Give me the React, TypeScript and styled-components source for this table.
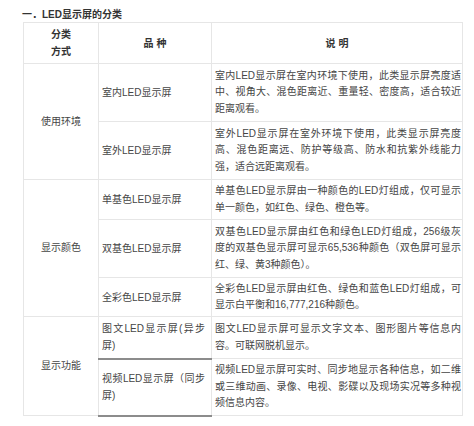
import styled, { createGlobalStyle } from "styled-components";

const GlobalStyle = createGlobalStyle`
  html, body {
    margin: 0;
    padding: 0;
    background: #fff;
  }
  body {
    font-family: "Liberation Sans", "Noto Sans CJK SC", sans-serif;
    color: #454545;
  }
`;

const Page = styled.div`
  width: 474px;
  height: 426px;
  padding: 8px 0 0 22px;
  box-sizing: border-box;
`;

const Title = styled.div`
  font-size: 10px;
  font-weight: bold;
  line-height: 14px;
  color: #333;
`;

const Table = styled.table`
  margin-left: 1px;
  width: 436px;
  border-collapse: collapse;
  table-layout: fixed;
  font-size: 10px;
`;

const HeadCell = styled.th<{ $w: number }>`
  width: ${(p) => p.$w}px;
  border: 1px solid #e6e6e6;
  padding: 3px 0;
  font-weight: bold;
  line-height: 17px;
  color: #333;
  text-align: center;
  vertical-align: middle;
`;

const Row = styled.tr<{ $h: number }>`
  height: ${(p) => p.$h}px;
`;

const GroupCell = styled.td`
  border: 1px solid #e6e6e6;
  text-align: center;
  vertical-align: middle;
  line-height: 16px;
  padding: 0;
`;

const KindCell = styled.td<{ $strong?: boolean }>`
  border: 1px solid #e6e6e6;
  border-bottom: ${(p) => (p.$strong ? "2px solid #8c8c8c" : "1px solid #e6e6e6")};
  padding: 0 6px 0 3px;
  vertical-align: middle;
  line-height: 17px;
`;

const NoteCell = styled.td`
  border: 1px solid #e6e6e6;
  padding: 0 1px 0 3px;
  vertical-align: middle;
  line-height: 16.5px;
`;

const Line = styled.span<{ $spread?: boolean }>`
  display: block;
  white-space: nowrap;
  text-align: justify;
  text-align-last: ${(p) => (p.$spread ? "justify" : "left")};
`;

type Item = {
  kind: string[];
  notes: string[];
  h: number;
  strong?: boolean;
};

type Group = {
  name: string;
  items: Item[];
};

const groups: Group[] = [
  {
    name: "使用环境",
    items: [
      {
        kind: ["室内LED显示屏"],
        h: 58,
        notes: [
          "室内LED显示屏在室内环境下使用，此类显示屏亮度适",
          "中、视角大、混色距离近、重量轻、密度高，适合较近",
          "距离观看。",
        ],
      },
      {
        kind: ["室外LED显示屏"],
        h: 58,
        notes: [
          "室外LED显示屏在室外环境下使用，此类显示屏亮度",
          "高、混色距离远、防护等级高、防水和抗紫外线能力",
          "强，适合远距离观看。",
        ],
      },
    ],
  },
  {
    name: "显示颜色",
    items: [
      {
        kind: ["单基色LED显示屏"],
        h: 40,
        notes: [
          "单基色LED显示屏由一种颜色的LED灯组成，仅可显示",
          "单一颜色，如红色、绿色、橙色等。",
        ],
      },
      {
        kind: ["双基色LED显示屏"],
        h: 58,
        notes: [
          "双基色LED显示屏由红色和绿色LED灯组成，256级灰",
          "度的双基色显示屏可显示65,536种颜色（双色屏可显示",
          "红、绿、黄3种颜色）。",
        ],
      },
      {
        kind: ["全彩色LED显示屏"],
        h: 39,
        notes: [
          "全彩色LED显示屏由红色、绿色和蓝色LED灯组成，可",
          "显示白平衡和16,777,216种颜色。",
        ],
      },
    ],
  },
  {
    name: "显示功能",
    items: [
      {
        kind: ["图文LED显示屏(异步", "屏)"],
        h: 42,
        strong: true,
        notes: [
          "图文LED显示屏可显示文字文本、图形图片等信息内",
          "容。可联网脱机显示。",
        ],
      },
      {
        kind: ["视频LED显示屏（同步", "屏)"],
        h: 57,
        strong: true,
        notes: [
          "视频LED显示屏可实时、同步地显示各种信息，如二维",
          "或三维动画、录像、电视、影碟以及现场实况等多种视",
          "频信息内容。",
        ],
      },
    ],
  },
];

const Lines = ({ lines }: { lines: string[] }) => (
  <>
    {lines.map((text, i) => (
      <Line key={i} $spread={i < lines.length - 1}>
        {text}
      </Line>
    ))}
  </>
);

export default function App() {
  return (
    <>
      <GlobalStyle />
      <Page>
        <Title>一．LED显示屏的分类</Title>
        <Table>
          <thead>
            <Row $h={40}>
              <HeadCell $w={74}>
                分类
                <br />
                方式
              </HeadCell>
              <HeadCell $w={112}>品 种</HeadCell>
              <HeadCell $w={250}>说 明</HeadCell>
            </Row>
          </thead>
          <tbody>
            {groups.map((group) =>
              group.items.map((item, i) => (
                <Row key={group.name + i} $h={item.h}>
                  {i === 0 && (
                    <GroupCell rowSpan={group.items.length}>{group.name}</GroupCell>
                  )}
                  <KindCell $strong={item.strong}>
                    <Lines lines={item.kind} />
                  </KindCell>
                  <NoteCell>
                    <Lines lines={item.notes} />
                  </NoteCell>
                </Row>
              ))
            )}
          </tbody>
        </Table>
      </Page>
    </>
  );
}
